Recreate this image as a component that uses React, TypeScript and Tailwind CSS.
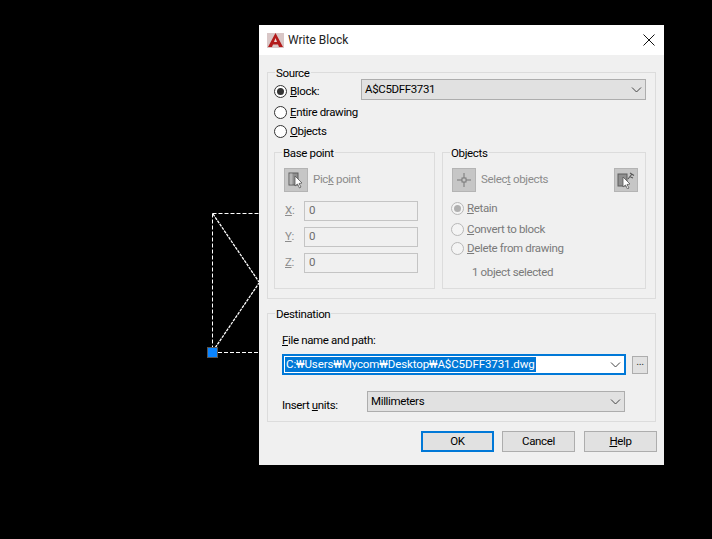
import type { ReactNode } from 'react'

const font = { fontFamily: 'Roboto, "Noto Sans CJK KR", sans-serif' }

function Chevron() {
    return (
        <svg width="11" height="6" viewBox="0 0 11 6" className="shrink-0">
            <path d="M1 0.5 L5.5 5 L10 0.5" fill="none" stroke="#444" strokeWidth="1" />
        </svg>
    )
}

function Group({ title, className, children }: { title: string; className: string; children: ReactNode }) {
    return (
        <div className={`relative border border-[#dcdcdc] ${className}`}>
            <span className="absolute left-[7px] top-[-8px] bg-[#f0f0f0] px-[1px] text-[11.5px] leading-[16px] text-black">{title}</span>
            {children}
        </div>
    )
}

function Radio({ label, checked, disabled, className }: { label: ReactNode; checked?: boolean; disabled?: boolean; className: string }) {
    return (
        <div className={`flex items-center gap-[3px] whitespace-nowrap text-[11.5px] leading-[16px] ${disabled ? 'text-[#7a7a7a]' : 'text-black'} ${className}`}>
            <span className={`flex h-[13px] w-[13px] shrink-0 items-center justify-center rounded-full border ${disabled ? 'border-[#b8b8b8] bg-[#f4f4f4]' : 'border-[#333] bg-white'}`}>
                {checked && <span className={`h-[7px] w-[7px] rounded-full ${disabled ? 'bg-[#b0b0b0]' : 'bg-[#333]'}`} />}
            </span>
            <span>{label}</span>
        </div>
    )
}

function Coord({ letter, className }: { letter: string; className: string }) {
    return (
        <div className={`flex h-[20px] items-center ${className}`}>
            <span className="w-[19px] text-[11.5px] text-[#8c8c8c]"><u>{letter}</u>:</span>
            <div className="flex h-[20px] w-[114px] items-center border border-[#c4c4c4] bg-[#f0f0f0] pl-[4px] text-[11.5px] text-[#6d6d6d]">0</div>
        </div>
    )
}

function PickIcon() {
    return (
        <svg width="16" height="18" viewBox="0 0 16 18">
            <rect x="1" y="2" width="9" height="12" fill="#8f8f8f" stroke="#5c5c5c" />
            <rect x="1.5" y="2.5" width="3" height="11" fill="#b5b5b5" />
            <path d="M7 5 L7 15 L9.5 13 L11.5 17 L13 16 L11 12.5 L14 12 Z" fill="#fff" stroke="#555" strokeWidth="0.8" />
        </svg>
    )
}

function SelectIcon() {
    return (
        <svg width="18" height="18" viewBox="0 0 18 18">
            <rect x="1" y="3" width="9" height="12" fill="#8f8f8f" stroke="#5c5c5c" />
            <path d="M6 6 L6 16 L8.5 14 L10.5 18 L12 17 L10 13.5 L13 13 Z" fill="#fff" stroke="#555" strokeWidth="0.8" />
            <path d="M11 8 L15 3 M13 2 L17 4.5 M13.5 6 L16 7" stroke="#555" strokeWidth="1.1" fill="none" />
        </svg>
    )
}

function IconButton({ children }: { children: ReactNode }) {
    return (
        <div className="flex h-[24px] w-[24px] items-center justify-center border border-[#b4b4b4] bg-[#c6c6c6]">{children}</div>
    )
}

function Button({ children, primary, className = '' }: { children: ReactNode; primary?: boolean; className?: string }) {
    return (
        <div className={`flex h-[21px] w-[73px] items-center justify-center bg-[#e1e1e1] text-[11.5px] text-black ${primary ? 'border-2 border-[#0078d7]' : 'border border-[#adadad]'} ${className}`}>
            {children}
        </div>
    )
}

export default function App() {
    return (
        <div className="relative h-[539px] w-[712px] overflow-hidden bg-black tracking-[-0.35px]" style={font}>
            {/* block outline behind the dialog */}
            <svg className="absolute left-0 top-0" width="712" height="539">
                <g stroke="#fff" strokeWidth="1" strokeDasharray="4 2" fill="none">
                    <path d="M212.5 213.5 H259" />
                    <path d="M212.5 213.5 V348" />
                    <path d="M218 352.5 H259" />
                    <path d="M213 214 L259 282" strokeWidth="1.3" strokeDasharray="3 1" />
                    <path d="M213 351 L259 283" strokeWidth="1.3" strokeDasharray="3 1" />
                </g>
                <rect x="207.5" y="347.5" width="10" height="10" fill="#0a84ff" stroke="#555" />
            </svg>

            <div className="absolute left-[259px] top-[25px] h-[440px] w-[405px] bg-[#f0f0f0]">
                <div className="flex h-[30px] items-center bg-white pl-[8px] pr-[9px]">
                    <svg width="17" height="17" viewBox="0 0 17 17">
                        <rect x="0" y="1" width="17" height="15" fill="#d9c7c7" />
                        <path d="M8.5 1 L16 15 L12 15 L11 12.5 L6 12.5 L5 15 L1 15 Z" fill="#b31b1b" />
                        <path d="M8.5 6 L10 10 L7 10 Z" fill="#eed5d5" />
                    </svg>
                    <span className="ml-[4px] text-[12px] tracking-normal text-[#222]">Write Block</span>
                    <svg className="ml-auto" width="12" height="12" viewBox="0 0 12 12">
                        <path d="M0.5 0.5 L11.5 11.5 M11.5 0.5 L0.5 11.5" stroke="#111" strokeWidth="1" />
                    </svg>
                </div>

                <div className="pl-[8px] pt-[17px]">
                    <Group title="Source" className="h-[227px] w-[389px]">
                        <div className="flex items-start pl-[6px]">
                            <div className="w-[87px]">
                                <Radio label={<><u>B</u>lock:</>} checked className="mt-[10px]" />
                                <Radio label={<><u>E</u>ntire drawing</>} className="mt-[5px]" />
                                <Radio label={<><u>O</u>bjects</>} className="mt-[3px]" />
                            </div>
                            <div className="mt-[6px] flex h-[21px] w-[285px] items-center justify-between border border-[#adadad] bg-[#e1e1e1] pl-[3px] pr-[3px] text-[11.5px] text-black">
                                <span>A$C5DFF3731</span>
                                <Chevron />
                            </div>
                        </div>

                        <div className="mt-[13px] flex gap-[7px] pl-[6px]">
                            <Group title="Base point" className="h-[137px] w-[161px] px-[9px] pt-[15px]">
                                <div className="flex items-center gap-[5px]">
                                    <IconButton><PickIcon /></IconButton>
                                    <span className="text-[11.5px] text-[#8c8c8c]">Pic<u>k</u> point</span>
                                </div>
                                <Coord letter="X" className="ml-[1px] mt-[9px]" />
                                <Coord letter="Y" className="ml-[1px] mt-[6px]" />
                                <Coord letter="Z" className="ml-[1px] mt-[6px]" />
                            </Group>
                            <Group title="Objects" className="h-[137px] w-[204px] pl-[9px] pr-[7px] pt-[15px]">
                                <div className="flex items-center gap-[5px]">
                                    <IconButton>
                                        <svg width="16" height="16" viewBox="0 0 16 16">
                                            <path d="M8 1 V6 M8 10 V15 M1 8 H6 M10 8 H15" stroke="#777" />
                                            <rect x="6" y="6" width="4" height="4" fill="none" stroke="#777" />
                                        </svg>
                                    </IconButton>
                                    <span className="text-[11.5px] text-[#8c8c8c]">Selec<u>t</u> objects</span>
                                    <span className="ml-auto"><IconButton><SelectIcon /></IconButton></span>
                                </div>
                                <Radio label={<><u>R</u>etain</>} checked disabled className="-ml-[1px] mt-[8px]" />
                                <Radio label={<><u>C</u>onvert to block</>} disabled className="-ml-[1px] mt-[5px]" />
                                <Radio label={<><u>D</u>elete from drawing</>} disabled className="-ml-[1px] mt-[3px]" />
                                <div className="ml-[20px] mt-[8px] text-[11.5px] leading-[16px] text-[#7a7a7a]">1 object selected</div>
                            </Group>
                        </div>
                    </Group>

                    <Group title="Destination" className="mt-[14px] h-[109px] w-[389px] pl-[14px] pt-[18px]">
                        <div className="text-[11.5px] leading-[16px] text-black"><u>F</u>ile name and path:</div>
                        <div className="mt-[6px] flex items-center gap-[6px]">
                            <div className="flex h-[21px] w-[344px] items-center justify-between border-2 border-[#0078d7] bg-white pl-[1px] pr-[3px]">
                                <span className="bg-[#0078d7] px-[1px] text-[11.5px] leading-[15px] tracking-[-0.1px] text-white">C:₩Users₩Mycom₩Desktop₩A$C5DFF3731.dwg</span>
                                <Chevron />
                            </div>
                            <div className="flex h-[18px] w-[16px] items-center justify-center border border-[#adadad] bg-[#e1e1e1] pb-[4px] text-[11px] text-[#333]">...</div>
                        </div>
                        <div className="mt-[16px] flex items-start">
                            <span className="mt-[6px] w-[85px] text-[11.5px] leading-[16px] text-black">Insert <u>u</u>nits:</span>
                            <div className="flex h-[21px] w-[258px] items-center justify-between border border-[#adadad] bg-[#e1e1e1] pl-[3px] pr-[3px] text-[11.5px] text-black">
                                <span>Millimeters</span>
                                <Chevron />
                            </div>
                        </div>
                    </Group>

                    <div className="mt-[9px] flex w-[390px] justify-end gap-[8px]">
                        <Button primary>OK</Button>
                        <Button>Cancel</Button>
                        <Button className="ml-[1px]"><span><u>H</u>elp</span></Button>
                    </div>
                </div>
            </div>
        </div>
    )
}
